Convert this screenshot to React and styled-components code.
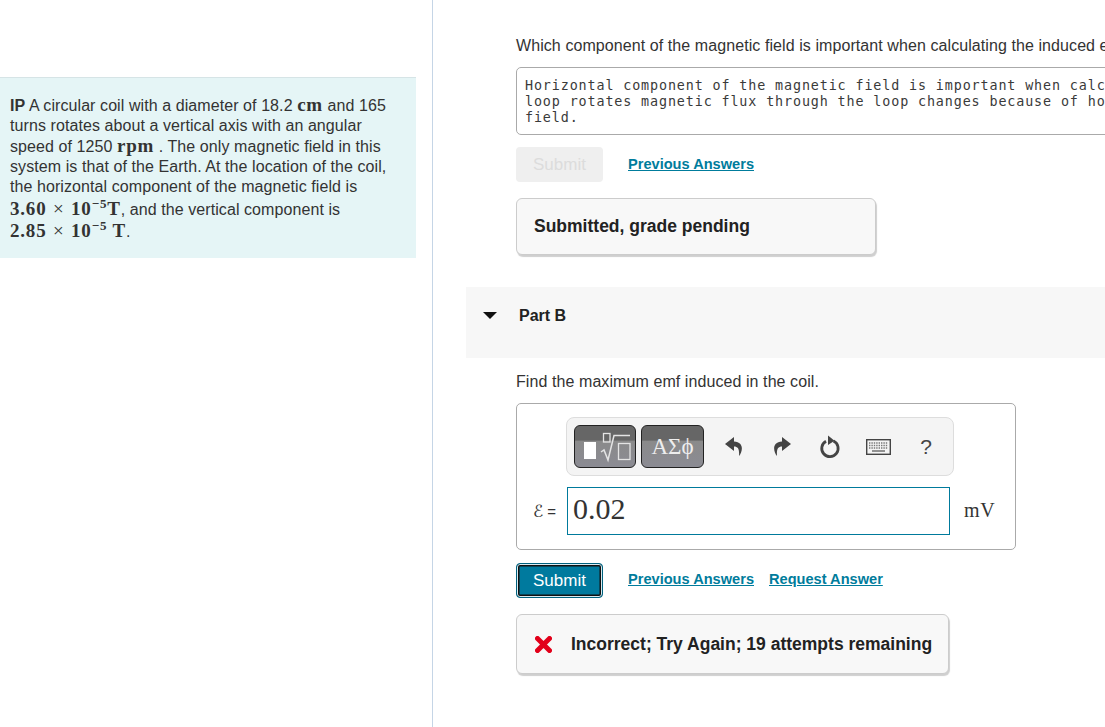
import React from "react";
import styled, { createGlobalStyle } from "styled-components";

const Global = createGlobalStyle`
  html, body {
    margin: 0;
    height: 727px;
    overflow: hidden;
    background: #fff;
    font-family: "Liberation Sans", Arial, sans-serif;
    color: #333;
  }
`;

const Page = styled.div`
  display: flex;
  width: 1105px;
  height: 727px;
  overflow: hidden;
`;

const Aside = styled.aside`
  flex: none;
  width: 433px;
  height: 727px;
  padding-top: 77px;
  box-sizing: border-box;
  border-right: 1px solid #c5d5e6;
`;

const Passage = styled.div`
  width: 416px;
  height: 181px;
  box-sizing: border-box;
  padding: 18px 10px 0 10px;
  background: #e5f5f6;
  border-top: 1px solid #d6e4e6;
  font-size: 16px;
  line-height: 20.3px;
  letter-spacing: 0.08px;
`;

const MathLine = styled.span`
  display: block;
  line-height: 22px;
  margin-top: ${(p) => p.$top || 0}px;
`;

const Math = styled.span`
  font-family: "Liberation Serif", "Times New Roman", serif;
  font-size: 19px;
  font-weight: 700;
  line-height: 0;
  letter-spacing: 0.8px;
  color: #333;

  sup {
    font-size: 13px;
    line-height: 0;
    vertical-align: 7px;
  }
`;

const Times = styled.span`
  margin: 0 1px;
  font-weight: 400;
`;

const Main = styled.main`
  flex: 1;
  min-width: 0;
  padding-top: 36px;
  overflow: hidden;
`;

const Section = styled.div`
  padding-left: 83px;
`;

const Prompt = styled.p`
  margin: 0;
  height: 20px;
  font-size: 16px;
  line-height: 20px;
  letter-spacing: 0.08px;
  white-space: nowrap;
`;

const EssayBox = styled.div`
  width: 800px;
  height: 68px;
  box-sizing: border-box;
  margin-top: 11px;
  padding: 10px 8px;
  border: 1px solid #aaa;
  border-radius: 5px;
  font-family: "DejaVu Sans Mono", monospace;
  font-size: 13.4px;
  letter-spacing: 0.87px;
  line-height: 16px;
  white-space: nowrap;
  color: #3a3a3a;
`;

const ActionRow = styled.div`
  display: flex;
  align-items: center;
  height: 35px;
  margin-top: ${(p) => p.$top}px;
`;

const SubmitButton = styled.button`
  width: 87px;
  height: 35px;
  padding: 0;
  box-sizing: border-box;
  margin-right: 25px;
  font-family: inherit;
  font-size: 17px;
  border-radius: 4px;
  color: ${(p) => (p.disabled ? "#dcdcdc" : "#fff")};
  background: ${(p) => (p.disabled ? "#efefef" : "#007a9e")};
  border: ${(p) => (p.disabled ? "none" : "1px solid #00617e")};
  box-shadow: ${(p) => (p.disabled ? "none" : "inset 0 0 0 1px #d8eaf0, inset 0 0 0 2.5px #111")};
`;

const LinkText = styled.a`
  margin: 0 15px ${(p) => p.$lift}px 0;
  font-size: 14.6px;
  font-weight: 700;
  color: #007c9c;
  text-decoration: underline;
`;

const Feedback = styled.div`
  display: flex;
  align-items: center;
  gap: 18px;
  box-sizing: border-box;
  width: ${(p) => p.$width}px;
  height: ${(p) => p.$height}px;
  margin-top: 16px;
  padding-left: 17px;
  background: #f8f8f8;
  border: 1px solid #ccc;
  border-radius: 6px;
  box-shadow: 1px 2px 1px #cfcfcf;
  font-size: 17.5px;
  font-weight: 700;
  color: #222;
`;

const PartBand = styled.div`
  display: flex;
  align-items: center;
  height: 71px;
  margin: 32px 0 14px 33px;
  padding: 0 0 14px 17px;
  box-sizing: border-box;
  background: #f7f7f7;
  font-size: 16px;
  font-weight: 700;
  color: #222;
`;

const Caret = styled.span`
  width: 0;
  height: 0;
  margin-right: 22px;
  border-left: 7px solid transparent;
  border-right: 7px solid transparent;
  border-top: 7px solid #111;
`;

const AnswerBox = styled.div`
  width: 500px;
  height: 147px;
  box-sizing: border-box;
  margin-top: 11px;
  padding: 13px 0 0 49px;
  border: 1px solid #aaa;
  border-radius: 5px;
`;

const Toolbar = styled.div`
  display: flex;
  align-items: center;
  width: 388px;
  height: 59px;
  box-sizing: border-box;
  padding-left: 7px;
  background: #f4f4f4;
  border: 1px solid #ddd;
  border-radius: 8px;
`;

const ToolGroup = styled.div`
  display: flex;
  justify-content: center;
  align-items: center;
  box-sizing: border-box;
  width: ${(p) => p.$width}px;
  height: 43px;
  margin-right: ${(p) => p.$gap}px;
  border: 1px solid #222;
  border-radius: 6px;
  background: linear-gradient(#666 0 35%, #8a8a8a 36%, #8b8b93 100%);
  font-family: "Liberation Serif", serif;
  font-size: 23px;
  color: #eee;
`;

const ToolIcon = styled.span`
  display: flex;
  justify-content: center;
  align-items: center;
  width: 48px;
  height: 30px;
  font-size: 21px;
  color: #444;
`;

const EntryRow = styled.div`
  display: flex;
  align-items: center;
  height: 48px;
  margin: 11px 0 0 -49px;
`;

const EntryLabel = styled.label`
  display: flex;
  align-items: center;
  justify-content: flex-end;
  width: 39px;
  gap: 4px;
  margin-right: 11px;
  font-size: 15px;
`;

const Script = styled.span`
  font-family: "DejaVu Sans", sans-serif;
  font-style: italic;
  font-size: 17px;
  line-height: 20px;
`;

const EntryField = styled.div`
  width: 383px;
  height: 48px;
  box-sizing: border-box;
  padding-left: 5px;
  border: 1px solid #007a9c;
  font-family: "Liberation Serif", serif;
  font-size: 30px;
  line-height: 42px;
  color: #333;
`;

const Unit = styled.span`
  margin: 0 0 2px 14px;
  font-family: "Liberation Serif", serif;
  font-size: 20px;
  letter-spacing: 0.8px;
`;

const CrossSvg = styled.svg`
  margin-left: 1px;
  margin-right: 1px;
`;

const UndoIcon = ({ flip }) => (
  <svg width="18" height="20" viewBox="0 0 18 20" style={flip ? { transform: "scaleX(-1)" } : undefined}>
    <path d="M9 0 L0 7 L9 14 V9.5 C13 9.5 14.5 12 14 19 C18 14 19 5 9 4.5 Z" fill="#444" />
  </svg>
);

const ResetIcon = () => (
  <svg width="22" height="24" viewBox="0 0 22 24">
    <path d="M7 6.2 A8.2 8.2 0 1 0 14.5 6" fill="none" stroke="#444" strokeWidth="2.8" />
    <path d="M9 0.5 L15.5 5.8 L9 10 Z" fill="#444" />
  </svg>
);

const KeyboardIcon = () => (
  <svg width="25" height="16" viewBox="0 0 25 16">
    <rect x="0.7" y="0.7" width="23.6" height="14.6" fill="#f4f4f4" stroke="#444" strokeWidth="1.4" />
    <path d="M3 4 H22 M3 6.5 H22 M3 9 H22" stroke="#777" strokeWidth="1.3" strokeDasharray="1.4 1" />
    <path d="M6 12 H19" stroke="#666" strokeWidth="1.4" />
  </svg>
);

const TemplateIcon = () => (
  <svg width="60" height="41" viewBox="0 0 60 41">
    <rect x="9" y="16" width="12" height="17" fill="#fff" />
    <rect x="28.5" y="7.5" width="6.5" height="8.5" fill="none" stroke="#e4e4e4" strokeWidth="1.3" />
    <path d="M26 26 L29 24 L33 34 L39 9.5 H55" fill="none" stroke="#e4e4e4" strokeWidth="1.5" />
    <rect x="43.5" y="17.5" width="11.5" height="16" fill="none" stroke="#e4e4e4" strokeWidth="1.3" />
  </svg>
);

const CrossIcon = () => (
  <CrossSvg width="17" height="17" viewBox="0 0 17 17">
    <path d="M2.5 2.5 L14.5 14.5 M14.5 2.5 L2.5 14.5" stroke="#e2001a" strokeWidth="5" strokeLinecap="round" />
  </CrossSvg>
);

export default function App() {
  return (
    <Page>
      <Global />
      <Aside>
        <Passage>
          <b>IP</b> A circular coil with a diameter of 18.2 <Math>cm</Math> and 165
          <br />
          turns rotates about a vertical axis with an angular
          <br />
          speed of 1250 <Math>rpm</Math> . The only magnetic field in this
          <br />
          system is that of the Earth. At the location of the coil,
          <br />
          the horizontal component of the magnetic field is
          <MathLine $top={2}>
            <Math>
              3.60 <Times>×</Times> 10<sup>−5</sup>T
            </Math>
            , and the vertical component is
          </MathLine>
          <MathLine>
            <Math>
              2.85 <Times>×</Times> 10<sup>−5</sup> T
            </Math>
            .
          </MathLine>
        </Passage>
      </Aside>
      <Main>
        <Section>
          <Prompt>Which component of the magnetic field is important when calculating the induced emf?</Prompt>
          <EssayBox>
            Horizontal component of the magnetic field is important when calculating the induced emf. As the
            <br />
            loop rotates magnetic flux through the loop changes because of horizontal component of the magnetic
            <br />
            field.
          </EssayBox>
          <ActionRow $top={12}>
            <SubmitButton disabled>Submit</SubmitButton>
            <LinkText $lift={2}>Previous Answers</LinkText>
          </ActionRow>
          <Feedback $width={360} $height={57}>
            Submitted, grade pending
          </Feedback>
        </Section>

        <PartBand>
          <Caret />
          Part B
        </PartBand>

        <Section>
          <Prompt>Find the maximum emf induced in the coil.</Prompt>
          <AnswerBox>
            <Toolbar>
              <ToolGroup $width={62} $gap={5}>
                <TemplateIcon />
              </ToolGroup>
              <ToolGroup $width={63} $gap={6}>ΑΣϕ</ToolGroup>
              <ToolIcon>
                <UndoIcon />
              </ToolIcon>
              <ToolIcon>
                <UndoIcon flip />
              </ToolIcon>
              <ToolIcon>
                <ResetIcon />
              </ToolIcon>
              <ToolIcon>
                <KeyboardIcon />
              </ToolIcon>
              <ToolIcon>?</ToolIcon>
            </Toolbar>
            <EntryRow>
              <EntryLabel>
                <Script>ℰ</Script> =
              </EntryLabel>
              <EntryField>0.02</EntryField>
              <Unit>mV</Unit>
            </EntryRow>
          </AnswerBox>
          <ActionRow $top={13}>
            <SubmitButton>Submit</SubmitButton>
            <LinkText $lift={3}>Previous Answers</LinkText>
            <LinkText $lift={3}>Request Answer</LinkText>
          </ActionRow>
          <Feedback $width={433} $height={60}>
            <CrossIcon />
            Incorrect; Try Again; 19 attempts remaining
          </Feedback>
        </Section>
      </Main>
    </Page>
  );
}
